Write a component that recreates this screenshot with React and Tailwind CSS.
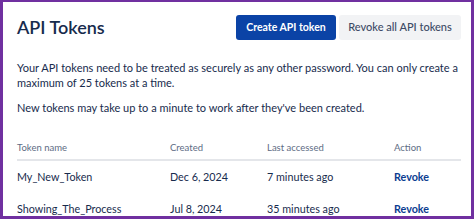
import React from 'react';

const tokens = [
  { name: 'My_New_Token', created: 'Dec 6, 2024', accessed: '7 minutes ago' },
  { name: 'Showing_The_Process', created: 'Jul 8, 2024', accessed: '35 minutes ago' },
];

export default function App() {
  return (
    <div className="w-[474px] h-[219px] overflow-hidden border-l-[3px] border-r-[3px] border-t-[2px] border-b-[3px] border-[#7030a0] bg-white text-[#172b4d] font-['Lato',sans-serif]">
      <div className="pl-[14px] pr-[10px]">
        <div className="flex items-center justify-between pt-[13px]">
          <h1 className="text-[18px] font-semibold leading-[25px] text-[#172b4d]">API Tokens</h1>
          <div className="flex gap-[3px]">
            <button className="h-[25px] w-[100px] rounded-[3px] bg-[#0b43a6] text-white text-[10.5px] font-bold">
              Create API token
            </button>
            <button className="h-[25px] w-[122px] rounded-[3px] bg-[#f2f3f5] text-[#3d4b66] text-[11px] font-medium">
              Revoke all API tokens
            </button>
          </div>
        </div>
        <p className="mt-[20px] text-[11px] leading-[15px] text-[#172b4d]">
          Your API tokens need to be treated as securely as any other password. You can only create a maximum of 25 tokens at a time.
        </p>
        <p className="mt-[10px] text-[11px] leading-[15px] text-[#172b4d]">
          New tokens may take up to a minute to work after they've been created.
        </p>
        <table className="mt-[27px] w-[444px] text-left">
          <thead>
            <tr className="border-b-2 border-[#e4e6ea] text-[9.5px] leading-[12px] text-[#5e6c84]">
              <th className="w-[153px] font-normal pb-[5px]">Token name</th>
              <th className="w-[97px] font-normal pb-[5px]">Created</th>
              <th className="w-[127px] font-normal pb-[5px]">Last accessed</th>
              <th className="font-normal pb-[5px]">Action</th>
            </tr>
          </thead>
          <tbody className="text-[10.75px]">
            {tokens.map((t) => (
              <tr key={t.name} className="h-[33px]">
                <td>{t.name}</td>
                <td>{t.created}</td>
                <td>{t.accessed}</td>
                <td className="font-bold text-[#0c3d91]">Revoke</td>
              </tr>
            ))}
          </tbody>
        </table>
      </div>
    </div>
  );
}
